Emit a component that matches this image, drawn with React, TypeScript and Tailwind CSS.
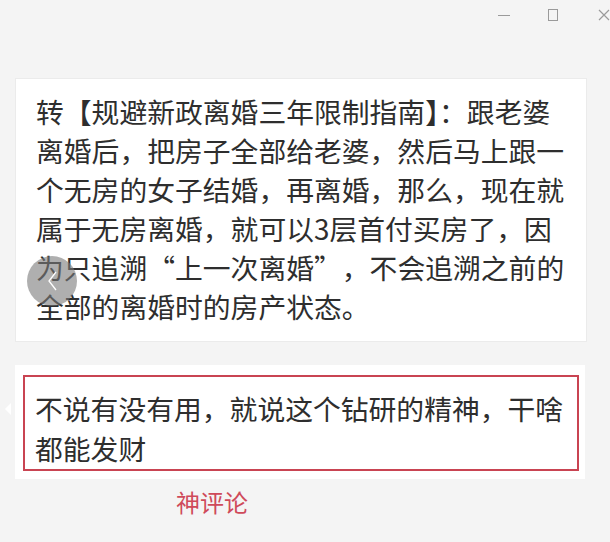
import React from "react";

const font = { fontFamily: '"Noto Sans CJK SC", "Microsoft YaHei", sans-serif' };

function Q({ c, side }: { c: string; side: "l" | "r" }) {
  return (
    <span className={side === "l" ? "inline-block w-[1em] text-right" : "inline-block w-[1em] text-left"}>
      {c}
    </span>
  );
}

export default function App() {
  const lines1 = [
    "转【规避新政离婚三年限制指南】：跟老婆",
    "离婚后，把房子全部给老婆，然后马上跟一",
    "个无房的女子结婚，再离婚，那么，现在就",
    "属于无房离婚，就可以3层首付买房了，因",
  ];
  return (
    <div
      className="relative w-[610px] h-[542px] overflow-hidden bg-[#f4f4f4] flex flex-col"
      style={font}
    >
      {/* title bar */}
      <div className="h-[30px] flex items-center shrink-0">
        <div className="ml-[498px] w-[14px] h-[1px] bg-[#9a9a9a]" />
        <div className="ml-[38px] w-[12px] h-[12px] border border-[#9a9a9a]" />
        <svg className="ml-[40px] shrink-0" width="12" height="12" viewBox="0 0 12 12">
          <path d="M1 1 L11 11 M11 1 L1 11" stroke="#9a9a9a" strokeWidth="1.2" fill="none" />
        </svg>
      </div>

      {/* card 1 */}
      <div className="mt-[48px] ml-[15px] w-[572px] h-[264px] bg-white border border-[#ebebeb] pt-[13px] pl-[20px] text-[#2e2e2e] text-[27.8px] leading-[39px] whitespace-nowrap">
        {lines1.map((l, i) => (
          <div key={i}>{l}</div>
        ))}
        <div>
          为只追溯<Q c="“" side="l" />上一次离婚<Q c="”" side="r" />，不会追溯之前的
        </div>
        <div>全部的离婚时的房产状态。</div>
      </div>

      {/* card 2 */}
      <div className="relative mt-[23px] ml-[15px] w-[570px] bg-white pt-[10px] pb-[8px] pl-[8px] pr-[6px]">
        <div className="absolute left-[-10px] top-[38px] w-0 h-0 border-y-[6px] border-y-transparent border-r-[6px] border-r-white" />
        <div className="border-2 border-[#c94452] pt-[11px] pb-[1px] pl-[10px] text-[#2e2e2e] text-[27.8px] leading-[40px] whitespace-nowrap">
          <div>不说有没有用，就说这个钻研的精神，干啥</div>
          <div>都能发财</div>
        </div>
      </div>

      <div className="mt-[8px] ml-[176px] text-[24px] leading-[30px] text-[#cf4a5a]">神评论</div>

      {/* overlay back button */}
      <div className="absolute left-[27px] top-[256px] w-[50px] h-[50px] rounded-full bg-[#7a7a7a]/60 flex items-center justify-center">
        <svg width="12" height="22" viewBox="0 0 12 22">
          <path d="M10 2 L3 11 L10 20" stroke="#ffffff" strokeWidth="1.3" fill="none" />
        </svg>
      </div>
    </div>
  );
}
